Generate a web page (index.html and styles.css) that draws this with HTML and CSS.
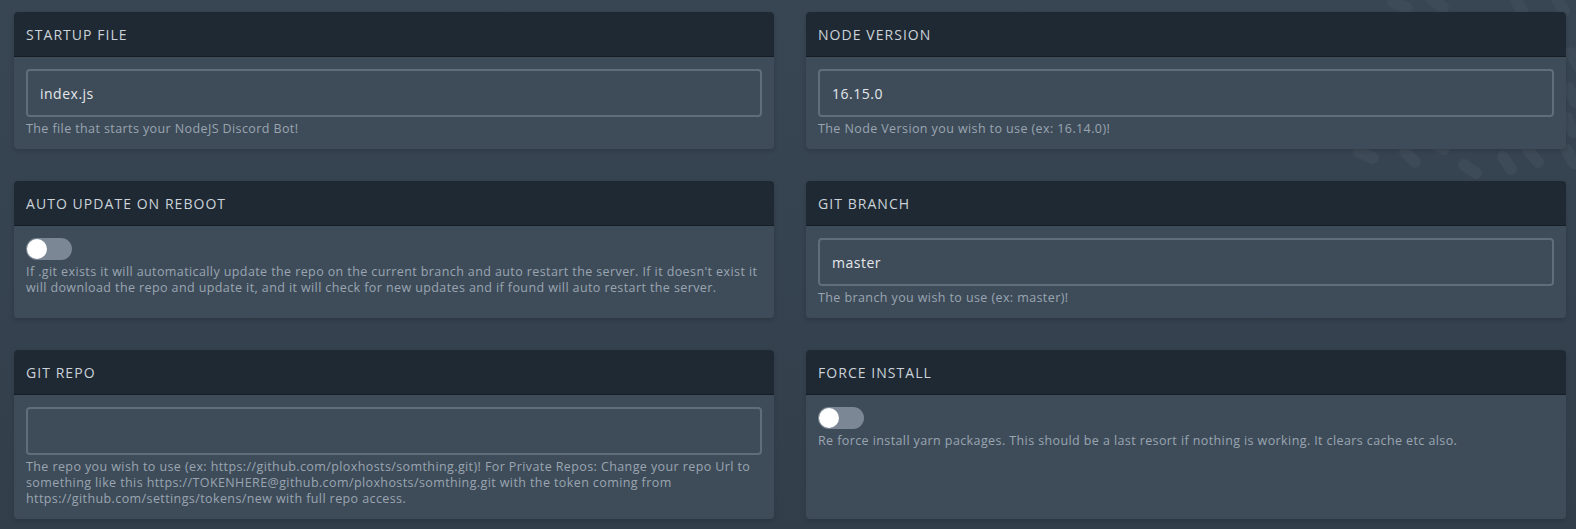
FILE: index.html
```html
<!DOCTYPE html>
<html lang="en">
<head>
  <meta charset="UTF-8">
  <meta name="viewport" content="width=device-width, initial-scale=1.0">
  <title>Startup</title>
  <link rel="stylesheet" href="styles.css">
</head>
<body>
  <svg class="bg-pattern" width="260" height="200" viewBox="0 0 260 200">
    <g stroke="#3d4a57" stroke-width="12" stroke-linecap="round" fill="none">
      <line x1="77" y1="2" x2="91" y2="8"/>
      <line x1="115" y1="-1" x2="127" y2="7"/>
      <line x1="198" y1="-3" x2="206" y2="11"/>
      <line x1="240" y1="-3" x2="248" y2="11"/>
      <line x1="255" y1="53" x2="263" y2="67"/>
      <line x1="253" y1="88" x2="259" y2="102"/>
      <line x1="251" y1="118" x2="257" y2="132"/>
      <line x1="43" y1="152" x2="57" y2="158"/>
      <line x1="89" y1="152" x2="99" y2="162"/>
      <line x1="120" y1="145" x2="128" y2="149"/>
      <line x1="148" y1="165" x2="160" y2="173"/>
      <line x1="187" y1="157" x2="195" y2="169"/>
      <line x1="212" y1="150" x2="222" y2="162"/>
      <line x1="250" y1="149" x2="258" y2="163"/>
    </g>
  </svg>

  <div class="settings-grid">
    <div class="card">
      <div class="card-header">Startup File</div>
      <div class="card-body">
        <input class="field" type="text" value="index.js">
        <p class="help">The file that starts your NodeJS Discord Bot!</p>
      </div>
    </div>

    <div class="card">
      <div class="card-header">Node Version</div>
      <div class="card-body">
        <input class="field" type="text" value="16.15.0">
        <p class="help">The Node Version you wish to use (ex: 16.14.0)!</p>
      </div>
    </div>

    <div class="card">
      <div class="card-header">Auto Update on Reboot</div>
      <div class="card-body">
        <div class="toggle"><span class="knob"></span></div>
        <p class="help">If .git exists it will automatically update the repo on the current branch and auto restart the server. If it doesn't exist it will download the repo and update it, and it will check for new updates and if found will auto restart the server.</p>
      </div>
    </div>

    <div class="card">
      <div class="card-header">Git Branch</div>
      <div class="card-body">
        <input class="field" type="text" value="master">
        <p class="help">The branch you wish to use (ex: master)!</p>
      </div>
    </div>

    <div class="card">
      <div class="card-header">Git Repo</div>
      <div class="card-body">
        <input class="field" type="text" value="">
        <p class="help">The repo you wish to use (ex: https://github.com/ploxhosts/somthing.git)! For Private Repos: Change your repo Url to something like this https://TOKENHERE@github.com/ploxhosts/somthing.git with the token coming from https://github.com/settings/tokens/new with full repo access.</p>
      </div>
    </div>

    <div class="card">
      <div class="card-header">Force Install</div>
      <div class="card-body">
        <div class="toggle"><span class="knob"></span></div>
        <p class="help">Re force install yarn packages. This should be a last resort if nothing is working. It clears cache etc also.</p>
      </div>
    </div>
  </div>
</body>
</html>
```

FILE: styles.css
```css
* {
  margin: 0;
  padding: 0;
  box-sizing: border-box;
}

body {
  background: linear-gradient(180deg, #384553 0%, #323f4b 100%);
  font-family: 'Open Sans', 'Noto Sans', sans-serif;
  min-height: 100vh;
  overflow: hidden;
  position: relative;
}

.bg-pattern {
  position: absolute;
  top: 0;
  right: 0;
  z-index: 0;
}

.settings-grid {
  position: relative;
  z-index: 1;
  display: grid;
  grid-template-columns: 760px 760px;
  gap: 32px;
  padding: 12px 0 0 14px;
}

.card {
  background: #3e4c59;
  border-radius: 4px;
  box-shadow: 0 2px 4px rgba(0, 0, 0, 0.15);
  display: flex;
  flex-direction: column;
  min-width: 0;
}

.card-header {
  background: #1f2933;
  border-radius: 4px 4px 0 0;
  border-bottom: 1px solid #161d24;
  height: 45px;
  padding: 0 12px;
  display: flex;
  align-items: center;
  color: #cbd2d9;
  font-size: 14px;
  text-transform: uppercase;
  letter-spacing: 1.05px;
}

.card-body {
  padding: 12px;
  flex: 1;
}

.field {
  display: block;
  width: 100%;
  height: 48px;
  background: #3e4c59;
  border: 2px solid #606d7b;
  border-radius: 4px;
  padding: 0 12px;
  color: #e4e7eb;
  font-family: inherit;
  font-size: 14px;
  letter-spacing: 0.5px;
  outline: none;
}

.help {
  margin-top: 4px;
  color: #9aa5b1;
  font-size: 12.5px;
  line-height: 16px;
  letter-spacing: 0.4px;
}

.toggle {
  width: 46px;
  height: 22px;
  border-radius: 11px;
  background: #7b8794;
  position: relative;
}

.knob {
  position: absolute;
  top: 1px;
  left: 1px;
  width: 20px;
  height: 20px;
  border-radius: 50%;
  background: #ffffff;
}
```
